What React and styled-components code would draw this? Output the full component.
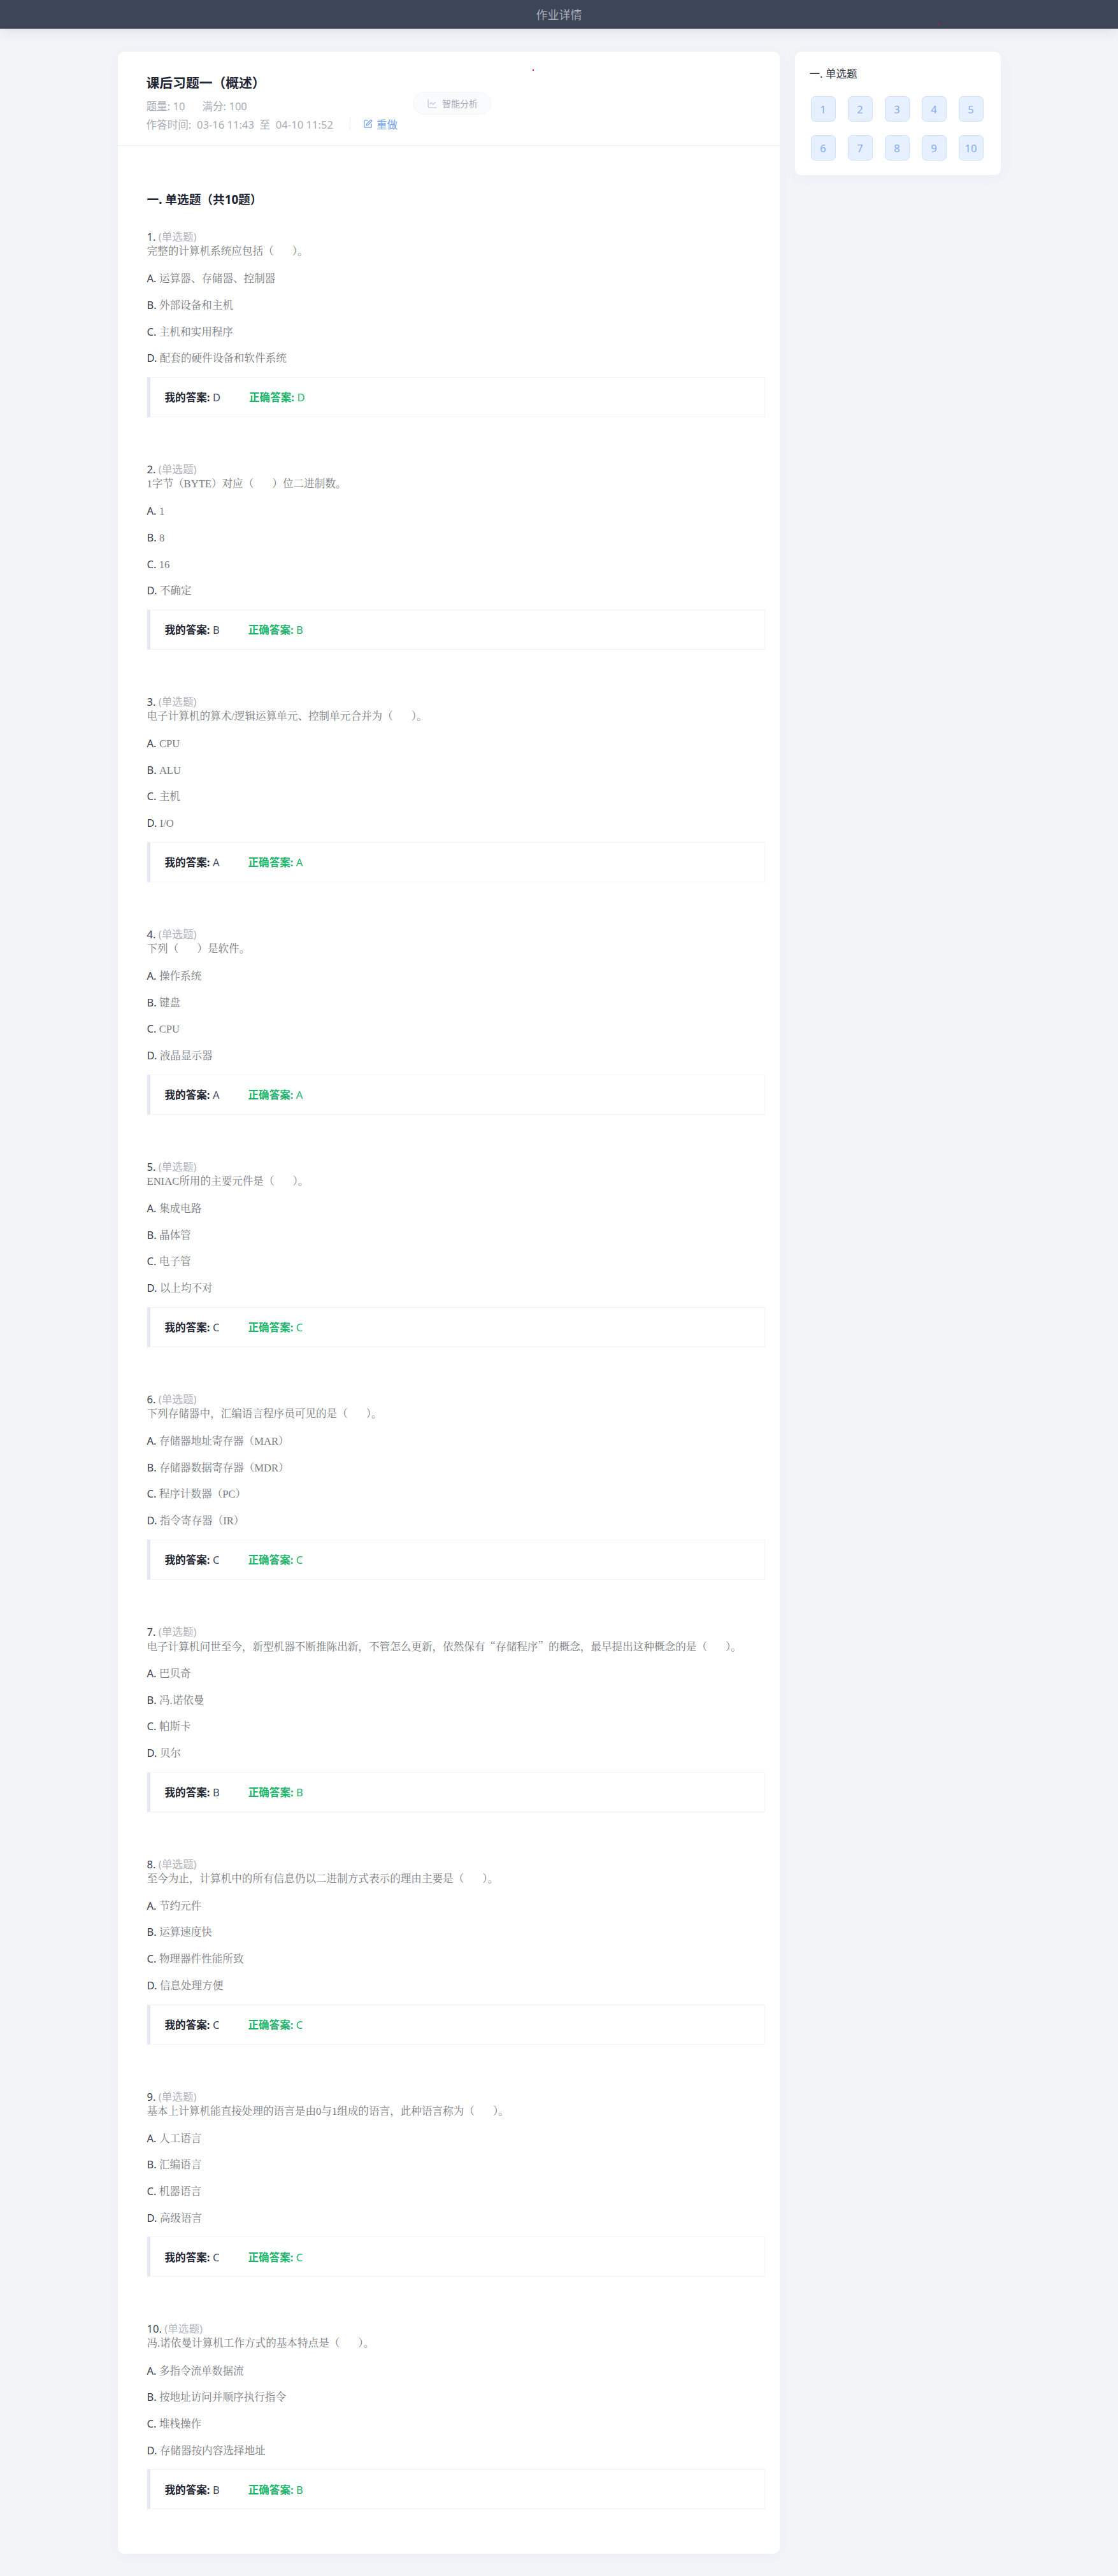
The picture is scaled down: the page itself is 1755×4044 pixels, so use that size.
import React from 'react';
import styled, { createGlobalStyle } from 'styled-components';
import { ChartLine, SquarePen } from 'lucide-react';

const sans = `"Noto Sans", "Noto Sans CJK SC", sans-serif`;
const serif = `"Liberation Serif", "Noto Serif CJK SC", "AR PL UMing CN", "Noto Sans CJK SC", serif`;
const cjkSerif = `"Noto Serif CJK SC", "AR PL UMing CN", "Noto Sans CJK SC", serif`;

const Global = createGlobalStyle`
  html, body { margin: 0; padding: 0; background: #f2f4f8; }
  body { font-family: ${sans}; color: #1f2533; }
  * { box-sizing: border-box; }
`;

const Page = styled.div`
  position: relative;
  width: 1755px;
  height: 4044px;
  background: #f2f4f8;
`;
const NavBar = styled.header`
  height: 46px;
  background: #3d4559;
  color: #adb0b9;
  font-size: 18px;
  line-height: 46px;
  text-align: center;
  box-shadow: 0 2px 22px rgba(30, 40, 70, 0.1);
  border-bottom: 1px solid #c9ccd3;
`;
const Main = styled.main`
  display: flex;
  justify-content: center;
  align-items: flex-start;
  gap: 24px;
  padding: 35px 0 35px;
`;
const Card = styled.section`
  width: 1039px;
  background: #fff;
  border-radius: 10px;
  box-shadow: 0 4px 24px rgba(60, 70, 110, 0.04);
`;
const CardHead = styled.div`
  display: flex;
  align-items: flex-start;
  gap: 24px;
  height: 148px;
  padding: 34px 45px 0;
  border-bottom: 1px solid #f0f1f4;
`;
const HeadInfo = styled.div`
  display: flex;
  flex-direction: column;
`;
const Title = styled.h1`
  margin: 0 0 6px;
  height: 30px;
  font-size: 20.8px;
  line-height: 30px;
  font-weight: 700;
  color: #1f2533;
`;
const MetaLine = styled.div`
  display: flex;
  align-items: center;
  height: 29px;
  font-size: 16.6px;
  color: #a9adb6;
`;
const MetaItem = styled.span`
  margin-right: 27px;
`;
const MetaSep = styled.i`
  width: 1px;
  height: 18px;
  margin: 0 20px 0 26px;
  background: #eceef2;
`;
const Redo = styled.span`
  display: inline-flex;
  align-items: center;
  gap: 6px;
  color: #6f9ef0;
`;
const AnalyzeBtn = styled.div`
  display: flex;
  align-items: center;
  gap: 7px;
  margin-top: 29px;
  flex: none;
  width: 123px;
  height: 36px;
  padding-left: 21px;
  border: 1px solid #f3f4f7;
  border-radius: 18px;
  background: #fafbfc;
  color: #a3acbd;
  font-size: 14px;
  svg { color: #c4cfe2; }
`;
const CardBody = styled.div`
  padding: 71px 23px 0 46px;
`;
const SectionTitle = styled.h2`
  margin: 0 0 34px;
  height: 26px;
  font-size: 18.7px;
  line-height: 26px;
  font-weight: 700;
  color: #1f2533;
`;
const Question = styled.article`
  margin-bottom: 70px;
`;
const QLabel = styled.div`
  height: 23px;
  font-size: 16.6px;
  line-height: 23px;
  color: #3a4050;
`;
const QType = styled.span`
  color: #b2b4bc;
`;
const QStem = styled.div`
  height: 23px;
  font-family: ${serif};
  font-size: 16.6px;
  line-height: 23px;
  color: #777a80;
  margin-bottom: 19.2px;
`;
const QuoteMark = styled.span`
  font-family: ${cjkSerif};
`;
const Option = styled.div`
  height: 24px;
  font-size: 16.6px;
  line-height: 24px;
  margin-bottom: 17.7px;
  color: #3a4050;
`;
const OptionText = styled.span`
  font-family: ${serif};
  color: #777a80;
`;
const AnswerBox = styled.div`
  display: flex;
  align-items: center;
  height: 63px;
  padding-left: 23px;
  border: 1px solid #f3f4f7;
  border-left: 5px solid #e3e8f4;
  font-size: 16.6px;
`;
const AnswerPart = styled.span`
  color: ${p => (p.$correct ? '#1bb46b' : '#4a505e')};
  margin-right: 45px;
  b { font-weight: 700; color: ${p => (p.$correct ? '#1bb46b' : '#1f2533')}; }
`;
const Side = styled.aside`
  width: 323px;
  height: 194px;
  padding: 0 25px;
  background: #fff;
  border-radius: 10px;
  box-shadow: 0 4px 24px rgba(60, 70, 110, 0.04);
`;
const SideTitle = styled.div`
  margin: 23px 0 23px -2px;
  height: 24px;
  font-size: 16.6px;
  line-height: 24px;
  color: #2b3140;
`;
const NumGrid = styled.div`
  display: grid;
  grid-template-columns: repeat(5, 39px);
  grid-auto-rows: 40px;
  column-gap: 19px;
  row-gap: 21px;
`;
const NumBtn = styled.div`
  display: flex;
  align-items: center;
  justify-content: center;
  border: 1.5px solid #cfe0fb;
  border-radius: 7px;
  background: #e6f0ff;
  color: #82acf2;
  font-size: 16.6px;
`;
const Speck = styled.i`
  position: absolute;
  left: ${p => p.$x}px;
  top: ${p => p.$y}px;
  width: 2px;
  height: 2px;
  background: #e8101f;
`;

const B = '（\u00a0\u00a0\u00a0\u00a0\u00a0\u00a0\u00a0）';
const questions = [
  { stem: `完整的计算机系统应包括${B}。`, opts: ['运算器、存储器、控制器', '外部设备和主机', '主机和实用程序', '配套的硬件设备和软件系统'], a: 'D' },
  { stem: `1字节（BYTE）对应${B}位二进制数。`, opts: ['1', '8', '16', '不确定'], a: 'B' },
  { stem: `电子计算机的算术/逻辑运算单元、控制单元合并为${B}。`, opts: ['CPU', 'ALU', '主机', 'I/O'], a: 'A' },
  { stem: `下列${B}是软件。`, opts: ['操作系统', '键盘', 'CPU', '液晶显示器'], a: 'A' },
  { stem: `ENIAC所用的主要元件是${B}。`, opts: ['集成电路', '晶体管', '电子管', '以上均不对'], a: 'C' },
  { stem: `下列存储器中，汇编语言程序员可见的是${B}。`, opts: ['存储器地址寄存器（MAR）', '存储器数据寄存器（MDR）', '程序计数器（PC）', '指令寄存器（IR）'], a: 'C' },
  { stem: <>电子计算机问世至今，新型机器不断推陈出新，不管怎么更新，依然保有<QuoteMark>“</QuoteMark>存储程序<QuoteMark>”</QuoteMark>的概念，最早提出这种概念的是{B}。</>, opts: ['巴贝奇', '冯.诺依曼', '帕斯卡', '贝尔'], a: 'B' },
  { stem: `至今为止，计算机中的所有信息仍以二进制方式表示的理由主要是${B}。`, opts: ['节约元件', '运算速度快', '物理器件性能所致', '信息处理方便'], a: 'C' },
  { stem: `基本上计算机能直接处理的语言是由0与1组成的语言，此种语言称为${B}。`, opts: ['人工语言', '汇编语言', '机器语言', '高级语言'], a: 'C' },
  { stem: `冯.诺依曼计算机工作方式的基本特点是${B}。`, opts: ['多指令流单数据流', '按地址访问并顺序执行指令', '堆栈操作', '存储器按内容选择地址'], a: 'B' },
];
const letters = ['A', 'B', 'C', 'D'];

export default function App() {
  return (
    <Page>
      <Global />
      <NavBar>作业详情</NavBar>
      <Main>
        <Card>
          <CardHead>
            <HeadInfo>
              <Title>课后习题一（概述）</Title>
              <MetaLine>
                <MetaItem>题量: 10</MetaItem>
                <span>满分: 100</span>
              </MetaLine>
              <MetaLine>
                <span>作答时间: &nbsp;03-16 11:43 &nbsp;至 &nbsp;04-10 11:52</span>
                <MetaSep />
                <Redo><SquarePen size={15} strokeWidth={2} />重做</Redo>
              </MetaLine>
            </HeadInfo>
            <AnalyzeBtn><ChartLine size={17} strokeWidth={2} />智能分析</AnalyzeBtn>
          </CardHead>
          <CardBody>
            <SectionTitle>一. 单选题（共10题）</SectionTitle>
            {questions.map((q, i) => (
              <Question key={i}>
                <QLabel>{i + 1}. <QType>(单选题)</QType></QLabel>
                <QStem>{q.stem}</QStem>
                {q.opts.map((o, j) => (
                  <Option key={j}>{letters[j]}. <OptionText>{o}</OptionText></Option>
                ))}
                <AnswerBox>
                  <AnswerPart><b>我的答案:</b> {q.a}</AnswerPart>
                  <AnswerPart $correct><b>正确答案:</b> {q.a}</AnswerPart>
                </AnswerBox>
              </Question>
            ))}
          </CardBody>
        </Card>
        <Side>
          <SideTitle>一. 单选题</SideTitle>
          <NumGrid>
            {questions.map((_, i) => <NumBtn key={i}>{i + 1}</NumBtn>)}
          </NumGrid>
        </Side>
      </Main>
      <Speck $x={836} $y={109} />
      <Speck $x={1472} $y={37} />
    </Page>
  );
}
